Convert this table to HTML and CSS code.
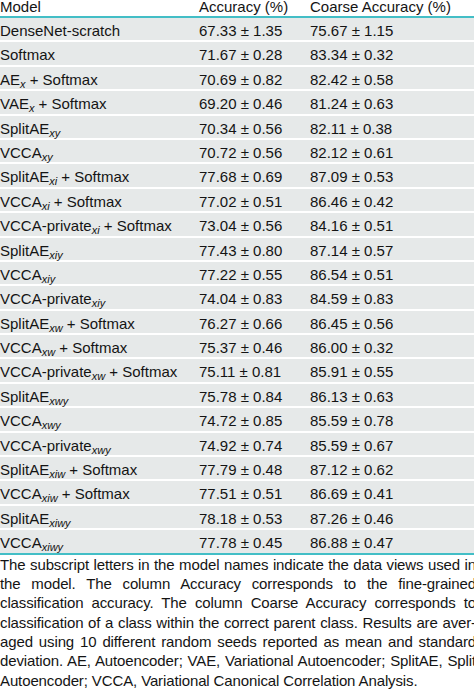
FILE: index.html
```html
<!DOCTYPE html>
<html>
<head>
<meta charset="utf-8">
<link rel="stylesheet" href="styles.css">
</head>
<body>
<div class="page">
  <div class="table">
    <div class="row head"><div>Model</div><div>Accuracy (%)</div><div>Coarse Accuracy (%)</div></div>
    <div class="rows">
      <div class="row"><div>DenseNet-scratch</div><div>67.33 ± 1.35</div><div>75.67 ± 1.15</div></div>
      <div class="row"><div>Softmax</div><div>71.67 ± 0.28</div><div>83.34 ± 0.32</div></div>
      <div class="row"><div>AE<span class="sub">x</span> + Softmax</div><div>70.69 ± 0.82</div><div>82.42 ± 0.58</div></div>
      <div class="row"><div>VAE<span class="sub">x</span> + Softmax</div><div>69.20 ± 0.46</div><div>81.24 ± 0.63</div></div>
      <div class="row"><div>SplitAE<span class="sub">xy</span></div><div>70.34 ± 0.56</div><div>82.11 ± 0.38</div></div>
      <div class="row"><div>VCCA<span class="sub">xy</span></div><div>70.72 ± 0.56</div><div>82.12 ± 0.61</div></div>
      <div class="row"><div>SplitAE<span class="sub">xi</span> + Softmax</div><div>77.68 ± 0.69</div><div>87.09 ± 0.53</div></div>
      <div class="row"><div>VCCA<span class="sub">xi</span> + Softmax</div><div>77.02 ± 0.51</div><div>86.46 ± 0.42</div></div>
      <div class="row"><div>VCCA-private<span class="sub">xi</span> + Softmax</div><div>73.04 ± 0.56</div><div>84.16 ± 0.51</div></div>
      <div class="row"><div>SplitAE<span class="sub">xiy</span></div><div>77.43 ± 0.80</div><div>87.14 ± 0.57</div></div>
      <div class="row"><div>VCCA<span class="sub">xiy</span></div><div>77.22 ± 0.55</div><div>86.54 ± 0.51</div></div>
      <div class="row"><div>VCCA-private<span class="sub">xiy</span></div><div>74.04 ± 0.83</div><div>84.59 ± 0.83</div></div>
      <div class="row"><div>SplitAE<span class="sub">xw</span> + Softmax</div><div>76.27 ± 0.66</div><div>86.45 ± 0.56</div></div>
      <div class="row"><div>VCCA<span class="sub">xw</span> + Softmax</div><div>75.37 ± 0.46</div><div>86.00 ± 0.32</div></div>
      <div class="row"><div>VCCA-private<span class="sub">xw</span> + Softmax</div><div>75.11 ± 0.81</div><div>85.91 ± 0.55</div></div>
      <div class="row"><div>SplitAE<span class="sub">xwy</span></div><div>75.78 ± 0.84</div><div>86.13 ± 0.63</div></div>
      <div class="row"><div>VCCA<span class="sub">xwy</span></div><div>74.72 ± 0.85</div><div>85.59 ± 0.78</div></div>
      <div class="row"><div>VCCA-private<span class="sub">xwy</span></div><div>74.92 ± 0.74</div><div>85.59 ± 0.67</div></div>
      <div class="row"><div>SplitAE<span class="sub">xiw</span> + Softmax</div><div>77.79 ± 0.48</div><div>87.12 ± 0.62</div></div>
      <div class="row"><div>VCCA<span class="sub">xiw</span> + Softmax</div><div>77.51 ± 0.51</div><div>86.69 ± 0.41</div></div>
      <div class="row"><div>SplitAE<span class="sub">xiwy</span></div><div>78.18 ± 0.53</div><div>87.26 ± 0.46</div></div>
      <div class="row"><div>VCCA<span class="sub">xiwy</span></div><div>77.78 ± 0.45</div><div>86.88 ± 0.47</div></div>
    </div>
  </div>
  <div class="caption">
    <span class="line">The subscript letters in the model names indicate the data views used in</span>
    <span class="line">the model. The column Accuracy corresponds to the fine-grained</span>
    <span class="line">classification accuracy. The column Coarse Accuracy corresponds to</span>
    <span class="line">classification of a class within the correct parent class. Results are aver-</span>
    <span class="line">aged using 10 different random seeds reported as mean and standard</span>
    <span class="line">deviation. AE, Autoencoder; VAE, Variational Autoencoder; SplitAE, Split</span>
    <span class="line last">Autoencoder; VCCA, Variational Canonical Correlation Analysis.</span>
  </div>
</div>
</body>
</html>
```

FILE: styles.css
```css
html, body {
  margin: 0;
  padding: 0;
  background: #ffffff;
  overflow: hidden;
}

.page {
  width: 474px;
  font-family: "Liberation Sans", Arial, Helvetica, sans-serif;
  font-size: 15px;
  color: #141414;
}

.table {
  display: flex;
  flex-direction: column;
}

.row {
  display: grid;
  grid-template-columns: 199px 111px 1fr;
  height: 22.4px;
  padding-top: 4px;
  box-sizing: border-box;
  line-height: 18.4px;
  background: #e6e9e9;
  white-space: nowrap;
}

.row.head {
  background: #ffffff;
  height: 18px;
  padding-top: 0;
  line-height: 13px;
  border-bottom: 2px solid #43bec6;
}

.rows {
  display: flex;
  flex-direction: column;
  gap: 2px;
  border-bottom: 2px solid #43bec6;
}

.sub {
  font-style: italic;
  font-size: 11px;
  position: relative;
  top: 3px;
  line-height: 0;
}

.caption {
  width: 476px;
  line-height: 19.33px;
  letter-spacing: -0.12px;
}

.line {
  display: block;
  white-space: nowrap;
  text-align: justify;
  text-align-last: justify;
}

.line.last {
  text-align-last: left;
}
```
